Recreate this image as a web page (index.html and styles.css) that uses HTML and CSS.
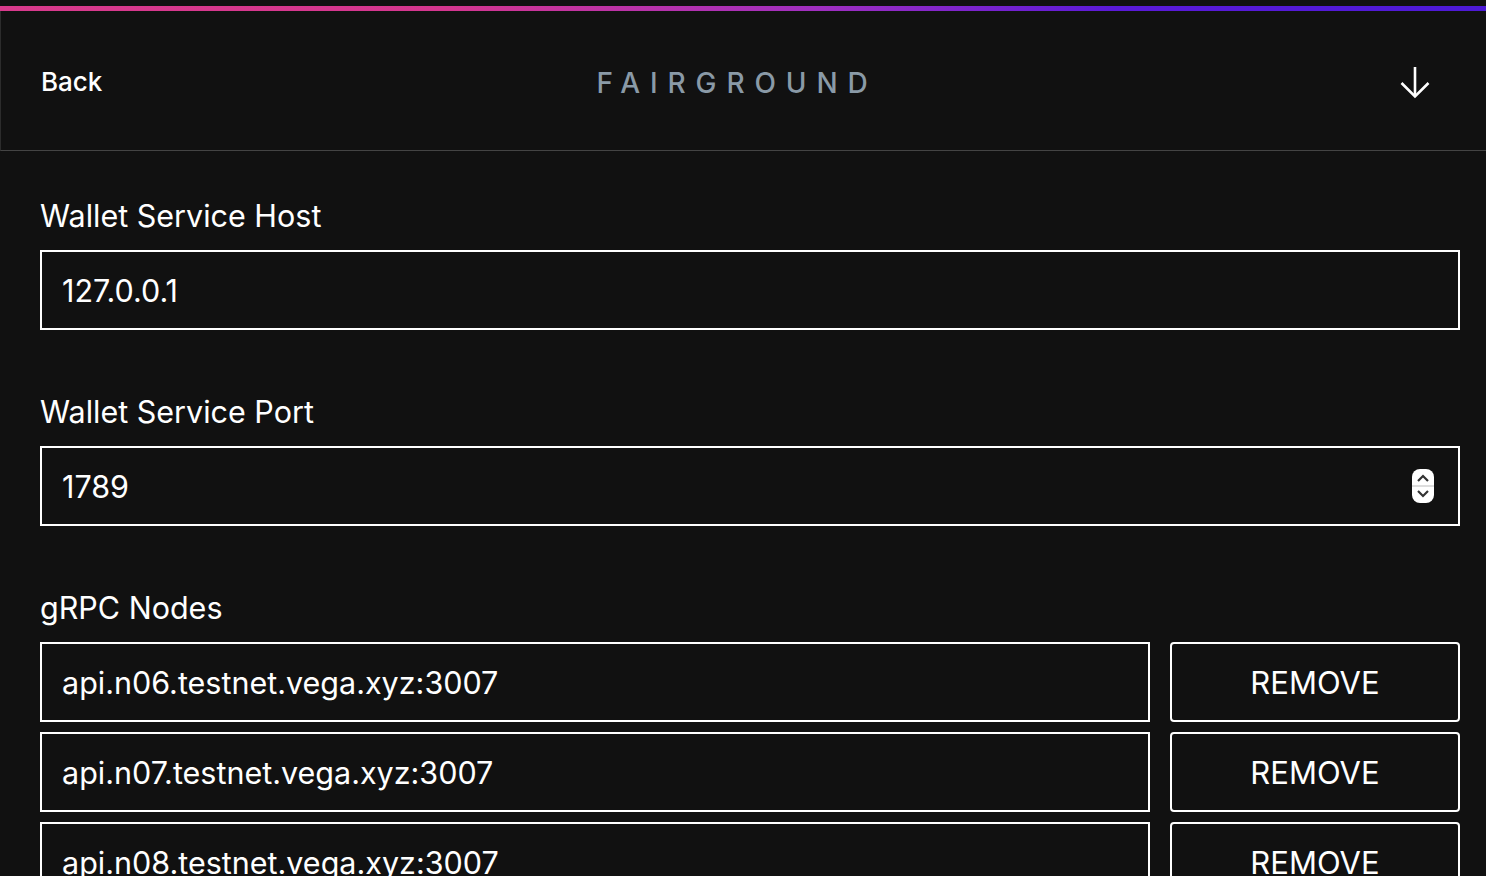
FILE: index.html
```html
<!DOCTYPE html>
<html lang="en">
<head>
  <meta charset="UTF-8">
  <meta name="viewport" content="width=device-width, initial-scale=1.0">
  <title>Fairground Wallet Settings</title>
  <link rel="stylesheet" href="styles.css">
</head>
<body>
  <div class="topbar"></div>
  <header class="header">
    <a class="back" href="#">Back</a>
    <div class="title">FAIRGROUND</div>
    <button class="icon-btn" aria-label="Download">
      <svg width="32" height="34" viewBox="0 0 32 34" fill="none" stroke="#fff" stroke-width="2.6" stroke-linecap="butt">
        <path d="M16 2 V31"/>
        <path d="M2.5 18 L16 31.5 L29.5 18"/>
      </svg>
    </button>
  </header>

  <main class="content">
    <div class="field">
      <label>Wallet Service Host</label>
      <div class="input-box">
        <input type="text" value="127.0.0.1">
      </div>
    </div>

    <div class="field">
      <label>Wallet Service Port</label>
      <div class="input-box">
        <input type="text" value="1789">
        <div class="spinner">
          <svg width="22" height="34" viewBox="0 0 22 34">
            <rect x="0" y="0" width="22" height="34" rx="8" fill="#fff"/>
            <rect x="0" y="16" width="22" height="2" fill="#ddd"/>
            <path d="M6 12 L11 7 L16 12" fill="none" stroke="#333" stroke-width="2.2"/>
            <path d="M6 22 L11 27 L16 22" fill="none" stroke="#333" stroke-width="2.2"/>
          </svg>
        </div>
      </div>
    </div>

    <div class="field">
      <label>gRPC Nodes</label>
      <div class="node-row">
        <div class="input-box"><input type="text" value="api.n06.testnet.vega.xyz:3007"></div>
        <button class="remove">REMOVE</button>
      </div>
      <div class="node-row">
        <div class="input-box"><input type="text" value="api.n07.testnet.vega.xyz:3007"></div>
        <button class="remove">REMOVE</button>
      </div>
      <div class="node-row">
        <div class="input-box"><input type="text" value="api.n08.testnet.vega.xyz:3007"></div>
        <button class="remove">REMOVE</button>
      </div>
    </div>
  </main>
</body>
</html>
```

FILE: styles.css
```css
body {
  font-family: Inter, "Noto Sans", sans-serif;
  background-color: #111;
  color: #fff;
  margin: 0;
  overflow: hidden;
}

.topbar {
  height: 5px;
  margin-top: 6px;
  background: linear-gradient(90deg, #d83a8c 0%, #d4368f 30%, #a02fc0 55%, #5a1ad8 75%, #4d1ad6 100%);
}

.header {
  display: flex;
  align-items: center;
  justify-content: space-between;
  height: 139px;
  padding: 0 40px;
  border-bottom: 1px solid #444;
  border-left: 1px solid #2c2c2c;
  position: relative;
}

.back {
  color: #fff;
  text-decoration: none;
  font-size: 26px;
  font-weight: 500;
  margin-top: 2px;
}

.title {
  position: absolute;
  left: 0;
  right: 0;
  top: 50%;
  transform: translateY(-50%);
  margin-top: 2px;
  text-align: center;
  font-size: 28px;
  font-weight: 500;
  letter-spacing: 9.9px;
  color: #8a9aa7;
  pointer-events: none;
  margin-left: -13px;
}

.icon-btn {
  background: none;
  border: none;
  padding: 0;
  margin-right: 15px;
  margin-top: 2px;
  cursor: pointer;
  display: flex;
}

.content {
  padding: 47px 26px 0 40px;
}

.field {
  margin-bottom: 64px;
}

.field label {
  display: block;
  font-size: 30.5px;
  line-height: 36px;
  margin-bottom: 16px;
}

.input-box {
  display: flex;
  align-items: center;
  height: 76px;
  border: 2px solid #fff;
  background-color: #111;
  box-sizing: content-box;
}

.input-box input {
  flex: 1;
  min-width: 0;
  height: 100%;
  padding: 0 0 0 20px;
  border: none;
  background: transparent;
  color: #fff;
  font-family: Inter, "Noto Sans", sans-serif;
  font-size: 30.5px;
  outline: none;
}

.spinner {
  display: flex;
  margin-right: 24px;
}

.node-row {
  display: flex;
  gap: 20px;
  margin-bottom: 10px;
}

.node-row .input-box {
  flex: 1;
}

.remove {
  width: 290px;
  height: 80px;
  background: #111;
  color: #fff;
  border: 2px solid #fff;
  border-radius: 4px;
  font-family: Inter, "Noto Sans", sans-serif;
  font-size: 31px;
  cursor: pointer;
}
```
